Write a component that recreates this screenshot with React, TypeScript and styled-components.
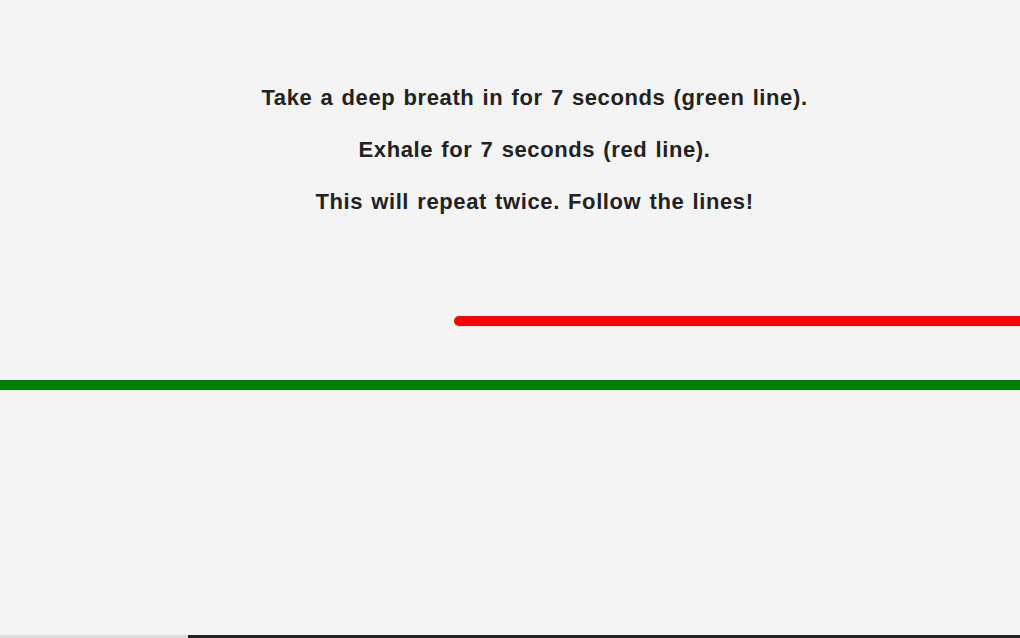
import React from 'react'
import styled, { createGlobalStyle } from 'styled-components';

const GlobalStyle = createGlobalStyle`
    html, body {
        margin: 0;
        padding: 0;
        background: #f4f4f4;
        font-family: "Liberation Sans", Arial, sans-serif;
    }
`;

const lines = [
    'Take a deep breath in for 7 seconds (green line).',
    'Exhale for 7 seconds (red line).',
    'This will repeat twice. Follow the lines!',
];

const App = () => {
    // the exhale line has started from the middle; it runs off the right edge
    const exhaleStart = 454;

    return (
        <>
            <GlobalStyle />
            <Container>
                <Instructions>
                    {lines.map((l) => (
                        <Line key={l}>{l}</Line>
                    ))}
                </Instructions>
                <Lane>
                    <ExhaleBar style={{ marginLeft: exhaleStart }} />
                </Lane>
                <InhaleBar />
                <Spacer />
                <Footer>
                    <FooterLeft />
                    <FooterRight />
                </Footer>
            </Container>
        </>
    )
}

const Container = styled.div`
    position: relative;
    height: 638px;
    width: 100%;
    overflow: hidden;
    display: flex;
    flex-direction: column;
    background: #f4f4f4;
`;

const Instructions = styled.div`
    display: flex;
    flex-direction: column;
    align-items: center;
    gap: 27px;
    padding: 85px 0 0 49px;
`;

const Line = styled.p`
    margin: 0;
    font-size: 22px;
    line-height: 25px;
    font-weight: 700;
    letter-spacing: 0.6px;
    word-spacing: 1.5px;
    color: #222;
    white-space: nowrap;
`;

const Lane = styled.div`
    display: flex;
    margin-top: 102px;
`;

const ExhaleBar = styled.div`
    flex: 1;
    height: 10px;
    margin-right: -20px;
    border-radius: 5px;
    background: #ff0000;
`;

const InhaleBar = styled.div`
    height: 10px;
    margin-top: 54px;
    background: #008000;
`;

const Spacer = styled.div`
    flex: 1;
`;

const Footer = styled.div`
    display: flex;
    height: 3px;
`;

const FooterLeft = styled.div`
    width: 188px;
    background: #dcdcdc;
`;

const FooterRight = styled.div`
    flex: 1;
    background: #222;
`;

export default App;
